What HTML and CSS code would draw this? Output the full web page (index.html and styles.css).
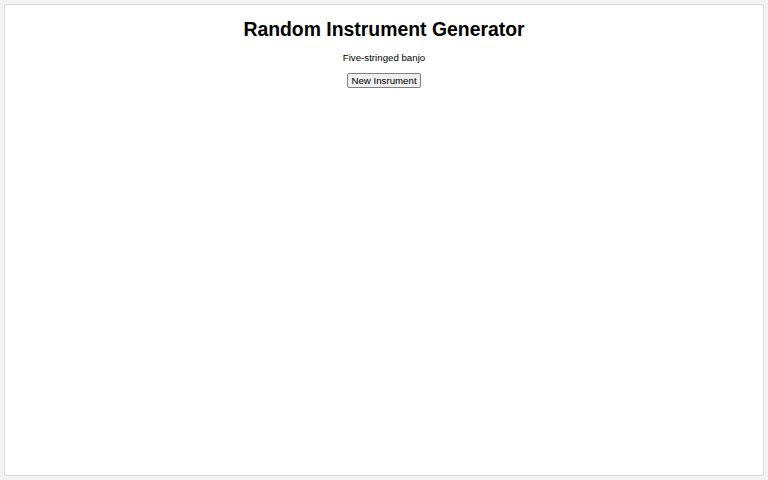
FILE: index.html
```html
<!DOCTYPE html>
<html>

    <head>
        <title>Random Instrument Generator</title>
        <link rel="stylesheet" href="styles.css">
    </head>

    <body>
        <div class="marco">
            <h1>Random Instrument Generator</h1>
            <p id="instrumento">Five-stringed banjo</p>
            <button id="btnNuevo">New Insrument</button>
        </div>
    </body>

</html>
```
FILE: styles.css
```css
html,
body {
    width: 100%;
    height: 100%;
    margin: 0;
    padding: 0;
    box-sizing: border-box;
    background-color: #f3f3f3;
}

body {
    padding: 4px;
}

.marco {
    height: 100%;
    box-sizing: border-box;
    background-color: #fff;
    border: 1px solid #dcdcdc;
    text-align: center;
    font-family: "Liberation Sans", Arial, sans-serif;
    color: #000;
}

h1 {
    font-size: 19.4px;
    margin: 12px 0 0;
    line-height: 24px;
}

#instrumento {
    font-size: 9.7px;
    margin: 11px 0 0;
    line-height: 12px;
}

#btnNuevo {
    font-family: "Liberation Sans", Arial, sans-serif;
    font-size: 9.7px;
    margin-top: 9px;
    padding: 1px 3px;
    background-color: #efefef;
    border: 1px solid #808080;
    border-radius: 2px;
    color: #000;
}
```
